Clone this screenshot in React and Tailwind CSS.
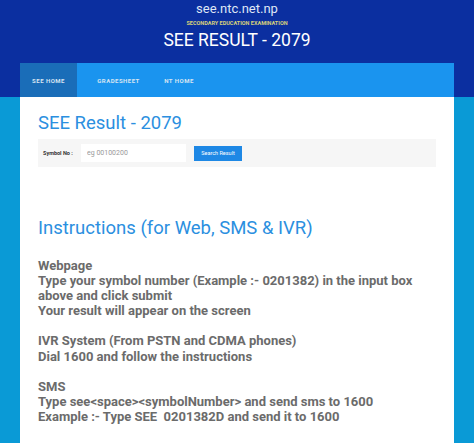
export default function App() {
  return (
    <div className="min-h-screen bg-[#0a9ad6] font-['Roboto',sans-serif]">
      {/* header */}
      <div className="bg-[#0b2fa0] pt-[1px]">
        <div className="text-center">
          <p className="text-[13px] leading-[16px] text-[#dfe6f5]">see.ntc.net.np</p>
          <p className="mt-[3px] text-[5.5px] leading-[7px] font-bold text-[#d8d27a]">SECONDARY EDUCATION EXAMINATION</p>
          <h1 className="mt-[1px] text-[17.5px] leading-[24px] text-white">SEE RESULT - 2079</h1>
        </div>
        <div className="mx-[20px] mt-[11px] flex h-[34px] bg-[#1a94ef]">
          <a className="flex w-[57px] items-center justify-center bg-[#1a6db8] text-[6px] font-bold tracking-[0.08em] text-[#d6e4f2]">SEE HOME</a>
          <a className="flex w-[83px] items-center justify-center text-[6px] font-bold tracking-[0.08em] text-[#d6e4f2]">GRADESHEET</a>
          <a className="flex w-[38px] items-center justify-center text-[6px] font-bold tracking-[0.08em] text-[#d6e4f2]">NT HOME</a>
        </div>
      </div>

      {/* content */}
      <div className="mx-[20px] bg-white px-[18px] pt-[15px] pb-[20px]">
        <h2 className="text-[18.5px] leading-[22px] text-[#2b8fe0]">SEE Result - 2079</h2>
        <div className="mt-[5px] flex h-[28px] items-center bg-[#f6f6f6] px-[5px]">
          <span className="w-[38px] text-[5.5px] font-bold text-[#333]">Symbol No :</span>
          <input
            className="h-[18px] w-[105px] bg-white px-[6px] text-[7px] text-[#555] outline-none placeholder:text-[#999]"
            placeholder="eg 00100200"
          />
          <button className="ml-[8px] h-[15px] w-[48px] bg-[#1e88e5] text-[5.5px] text-white">Search Result</button>
        </div>

        <h2 className="mt-[50px] text-[18.5px] leading-[22px] text-[#2b8fe0]">Instructions (for Web, SMS &amp; IVR)</h2>

        <div className="mt-[19px] text-[13px] leading-[15.1px] font-bold text-[#6b6b6b]">
          <p>Webpage</p>
          <p>Type your symbol number (Example :- 0201382) in the input box above and click submit</p>
          <p>Your result will appear on the screen</p>
          <br />
          <p>IVR System (From PSTN and CDMA phones)</p>
          <p>Dial 1600 and follow the instructions</p>
          <br />
          <p>SMS</p>
          <p>Type see&lt;space&gt;&lt;symbolNumber&gt; and send sms to 1600</p>
          <p>Example :- Type SEE&nbsp; 0201382D and send it to 1600</p>
        </div>
      </div>
    </div>
  );
}
